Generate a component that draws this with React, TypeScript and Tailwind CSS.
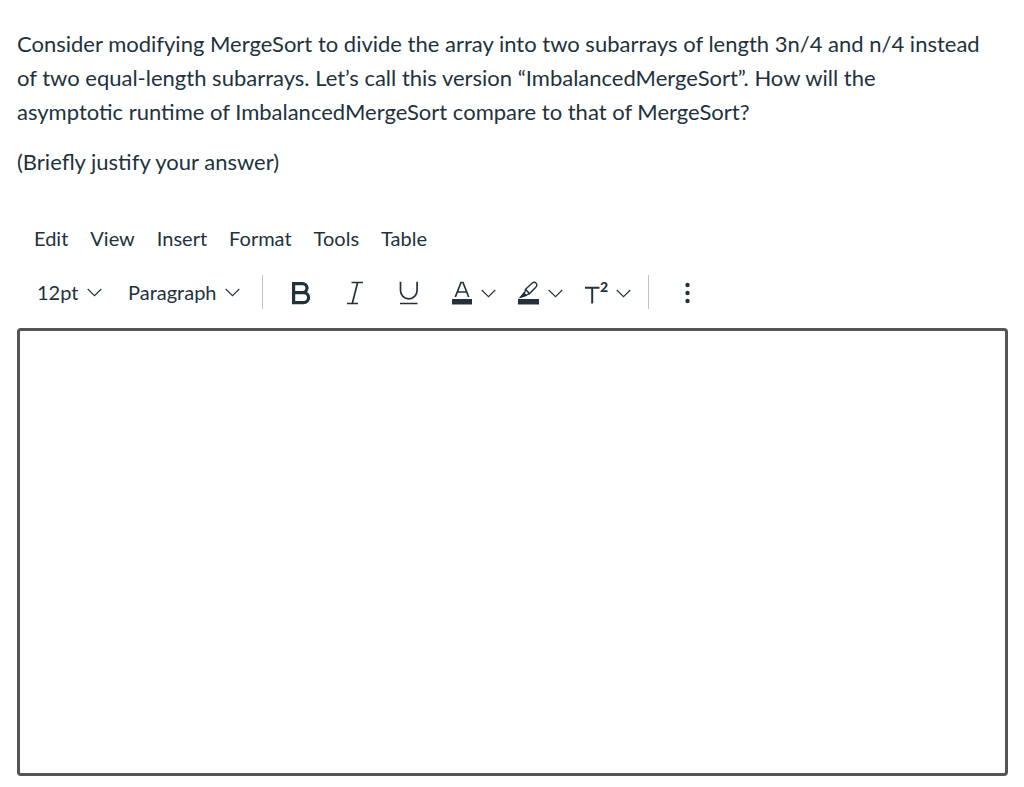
import type { ReactNode } from "react";

const menus = ["Edit", "View", "Insert", "Format", "Tools", "Table"];

function Chevron() {
  return (
    <svg viewBox="0 0 15 9" className="h-[9px] w-[15px] shrink-0" fill="none" stroke="currentColor" strokeWidth="1.1">
      <path d="M0.7 1 L7.5 7.7 L14.3 1" />
    </svg>
  );
}

function Divider() {
  return <div className="h-[34px] w-px bg-[#bcc4c9]" />;
}

function Picker({ label, options, width }: { label: string; options: string[]; width: string }) {
  return (
    <div className={`relative flex items-center ${width}`}>
      <select aria-label={label} className="w-full appearance-none bg-transparent text-xl leading-7 outline-none">
        {options.map((option) => (
          <option key={option}>{option}</option>
        ))}
      </select>
      <span className="pointer-events-none absolute right-0">
        <Chevron />
      </span>
    </div>
  );
}

function ToolButton({ label, menu, children }: { label: string; menu?: boolean; children: ReactNode }) {
  return (
    <button type="button" aria-label={label} className="flex items-center gap-[9px] pt-0.5">
      {children}
      {menu && <Chevron />}
    </button>
  );
}

export default function App() {
  return (
    <main className="bg-white pt-[27px] pr-4 pb-3 pl-[17px] font-['Lato',sans-serif] text-[#22323d]">
      <div className="space-y-4 pr-[25px] text-[22px] leading-[34px]">
        <p>
          Consider modifying MergeSort to divide the array into two subarrays of length 3n/4 and n/4 instead of two
          equal-length subarrays. Let’s call this version “ImbalancedMergeSort”. How will the asymptotic runtime of
          ImbalancedMergeSort compare to that of MergeSort?
        </p>
        <p>(Briefly justify your answer)</p>
      </div>

      <nav className="mt-[45px] flex gap-[22px] px-[17px] text-xl leading-7">
        {menus.map((menu) => (
          <button key={menu} type="button">
            {menu}
          </button>
        ))}
      </nav>

      <div role="toolbar" aria-label="Formatting" className="mt-[22px] flex h-[36px] items-center px-5">
        <div className="flex items-center gap-[26px]">
          <Picker label="Font size" options={["12pt", "14pt", "18pt"]} width="w-[65px]" />
          <Picker label="Block style" options={["Paragraph", "Heading 2", "Heading 3"]} width="w-[112px]" />
        </div>
        <div className="ml-[22px]">
          <Divider />
        </div>

        <div className="ml-7 flex items-center gap-[34px]">
          <ToolButton label="Bold">
            <svg viewBox="0 0 20 24" className="h-6 w-5" fill="none" stroke="currentColor" strokeWidth="3.2">
              <path d="M2.6 2.6 H11.5 A4.4 4.4 0 0 1 11.5 11.6 H2.6 M11.5 11.6 H12.6 A4.9 4.9 0 0 1 12.6 21.6 H2.6 M2.6 1 V23.2" />
            </svg>
          </ToolButton>
          <ToolButton label="Italic">
            <svg viewBox="0 0 20 24" className="h-6 w-5" fill="none" stroke="currentColor" strokeWidth="1.7">
              <path d="M6.5 1.5 H18 M2 22.5 H13 M12.6 1.5 L7.3 22.5" />
            </svg>
          </ToolButton>
          <ToolButton label="Underline">
            <svg viewBox="0 0 20 24" className="h-6 w-5" fill="none" stroke="currentColor" strokeWidth="1.7">
              <path d="M1.5 0.8 V9.5 A8.3 8.3 0 0 0 18.1 9.5 V0.8 M1 22.5 H18.5" />
            </svg>
          </ToolButton>
        </div>

        <div className="ml-[33px] flex items-center gap-[22px]">
          <ToolButton label="Text color" menu>
            <svg viewBox="0 0 20 24" className="h-6 w-5" fill="none" stroke="currentColor" strokeWidth="1.7">
              <path d="M3.3 16 L9 1.5 H11 L16.7 16 M5.3 11 H14.7" />
              <path d="M0 18 H20 V23.5 H0 Z" fill="currentColor" stroke="none" />
            </svg>
          </ToolButton>
          <ToolButton label="Highlight color" menu>
            <svg viewBox="0 0 21 24" className="h-6 w-[21px]" fill="none" stroke="currentColor" strokeWidth="1.4">
              <path d="M7.6 8.2 L14.2 2 Q16.6 0.4 18.2 2.4 Q19.6 4.2 17.8 6.2 L11.4 12.6 Z" />
              <path d="M7.6 8.2 L7 11 L3.4 15.8 L9.4 13.6 L11.4 12.6" />
              <path d="M2.6 16.2 L6 12 L8 14.4 Z" fill="currentColor" />
              <path d="M0 18 H21 V23.5 H0 Z" fill="currentColor" stroke="none" />
            </svg>
          </ToolButton>
          <ToolButton label="Superscript" menu>
            <svg viewBox="0 0 22 24" className="h-6 w-[22px] overflow-visible" fill="none" stroke="currentColor" strokeWidth="2">
              <path d="M0 6.8 H14.5 M7.2 6.8 V22.5" />
              <text x="15" y="11" fill="currentColor" stroke="none" fontSize="14" fontWeight="900">
                2
              </text>
            </svg>
          </ToolButton>
        </div>
        <div className="ml-[17px]">
          <Divider />
        </div>

        <div className="ml-9">
          <ToolButton label="More">
            <svg viewBox="0 0 5 24" className="h-6 w-[5px]" fill="currentColor">
              <circle cx="2.5" cy="4" r="2.2" />
              <circle cx="2.5" cy="12" r="2.2" />
              <circle cx="2.5" cy="20" r="2.2" />
            </svg>
          </ToolButton>
        </div>
      </div>

      <textarea
        aria-label="Answer"
        className="mt-[18px] block h-[448px] w-full resize-none rounded-[4px] border-3 border-[#555] p-4 text-xl outline-none"
      />
    </main>
  );
}
